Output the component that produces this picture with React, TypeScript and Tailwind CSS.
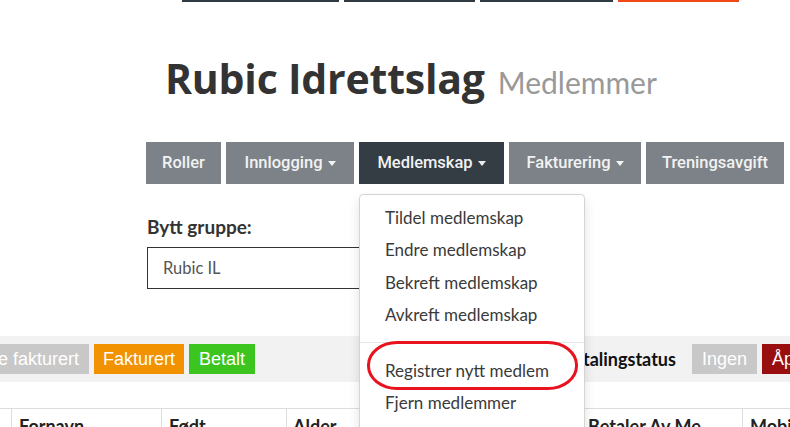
import React from 'react';

const navItems = [
  { label: 'Roller', caret: false, w: 'w-[75px]' },
  { label: 'Innlogging', caret: true, w: 'w-[128px]' },
  { label: 'Medlemskap', caret: true, w: 'w-[145px]', active: true },
  { label: 'Fakturering', caret: true, w: 'w-[132px]' },
  { label: 'Treningsavgift', caret: false, w: 'w-[138px]' },
];

const menuTop = ['Tildel medlemskap', 'Endre medlemskap', 'Bekreft medlemskap', 'Avkreft medlemskap'];

const Caret = () => (
  <span className="ml-[5px] inline-block h-0 w-0 border-x-[4px] border-t-[5px] border-x-transparent border-t-white/90 align-middle" />
);

export default function App() {
  return (
    <div className="relative h-[427px] w-[790px] overflow-hidden bg-white font-['Lato',sans-serif] text-[#333]">
      {/* top strip of bars */}
      <div className="flex gap-[5px] pl-[182px]">
        <div className="h-[2px] w-[157px] bg-[#2f3a43]" />
        <div className="h-[2px] w-[131px] bg-[#2f3a43]" />
        <div className="h-[2px] w-[133px] bg-[#2f3a43]" />
        <div className="h-[2px] w-[121px] bg-[#f04a1a]" />
      </div>

      {/* title */}
      <div className="mt-[52px] flex items-baseline gap-[13px] pl-[165px]">
        <h1 className="font-['Open_Sans',sans-serif] text-[41px] font-bold leading-[48px] tracking-[-0.2px] text-[#333]">
          Rubic Idrettslag
        </h1>
        <span className="text-[30px] leading-[48px] text-[#999]">Medlemmer</span>
      </div>

      {/* nav */}
      <div className="relative mt-[36px] pl-[146px]">
        <div className="flex gap-[5px]">
          {navItems.map((n) => (
            <div
              key={n.label}
              className={`flex h-[42px] shrink-0 items-center justify-center font-['Roboto',sans-serif] text-[16.5px] font-medium text-[#f2f2f2] ${n.w} ${
                n.active ? 'bg-[#343c44]' : 'bg-[#7c8287]'
              }`}
            >
              {n.label}
              {n.caret && <Caret />}
            </div>
          ))}
        </div>

        {/* dropdown */}
        <div className="absolute left-[359px] top-[52px] z-10 w-[226px] rounded-[4px] border border-[#d4d4d4] bg-white pt-[6px] pb-[20px] shadow-[0_6px_12px_rgba(0,0,0,0.12)]">
          {menuTop.map((m) => (
            <div key={m} className="flex h-[32.5px] items-center pl-[25px] text-[17px] text-[#3a3a3a]">
              {m}
            </div>
          ))}
          <div className="my-[11px] h-px bg-[#e5e5e5]" />
          <div className="relative">
            <div className="flex h-[32.5px] items-center pl-[25px] text-[17px] text-[#3a3a3a]">Registrer nytt medlem</div>
            <div className="pointer-events-none absolute left-[7px] top-[-13px] h-[49px] w-[211px] rounded-[30px/24px] border-[3px] border-[#e8131f]" />
          </div>
          <div className="flex h-[32.5px] items-center pl-[25px] text-[17px] text-[#3a3a3a]">Fjern medlemmer</div>
        </div>
      </div>

      {/* group selector */}
      <div className="mt-[30px] pl-[147px]">
        <div className="text-[19px] font-bold leading-[26px] text-[#333]">Bytt gruppe:</div>
        <div className="mt-[7px] flex h-[42px] w-[400px] items-center border border-[#333] pl-[15px] text-[16.5px] text-[#555]">
          Rubic IL
        </div>
      </div>

      {/* status strip */}
      <div className="mt-[47px] flex h-[46px] items-center bg-[#f2f2f2] font-['Liberation_Sans',sans-serif] text-[18px] text-white">
        <div className="-ml-[35px] flex gap-[5px]">
          <div className="flex h-[30px] items-center bg-[#c8c8c8] px-[10px]">Ikke fakturert</div>
          <div className="flex h-[30px] items-center bg-[#f39200] px-[9px]">Fakturert</div>
          <div className="flex h-[30px] items-center bg-[#3cc51f] px-[10px]">Betalt</div>
        </div>
        <div className="-mr-[34px] ml-auto flex items-center gap-[5px]">
          <span className="mr-[11px] font-['Lato',sans-serif] text-[18px] font-bold text-[#111]">Betalingstatus</span>
          <div className="flex h-[30px] items-center bg-[#c8c8c8] px-[10px]">Ingen</div>
          <div className="flex h-[30px] items-center bg-[#990f0f] px-[10px]">Åpen</div>
        </div>
      </div>

      {/* table header */}
      <div className="mt-[26px] flex h-[40px] border-t border-[#ddd] text-[18px] font-bold text-[#222]">
        <div className="w-[12px] shrink-0 border-r border-[#ddd]" />
        <div className="w-[150px] shrink-0 border-r border-[#ddd] pl-[7px] pt-[4px]">Fornavn</div>
        <div className="w-[125px] shrink-0 border-r border-[#ddd] pl-[7px] pt-[4px]">Født</div>
        <div className="w-[150px] shrink-0 border-r border-[#ddd] pl-[6px] pt-[4px]">Alder</div>
        <div className="w-[145px] shrink-0 border-r border-[#ddd] pl-[6px] pt-[4px]">Kjønn</div>
        <div className="w-[161px] shrink-0 overflow-hidden whitespace-nowrap border-r border-[#ddd] pl-[6px] pt-[4px]">Betaler Av Me</div>
        <div className="shrink-0 whitespace-nowrap pl-[7px] pt-[4px]">Mobil</div>
      </div>
    </div>
  );
}
